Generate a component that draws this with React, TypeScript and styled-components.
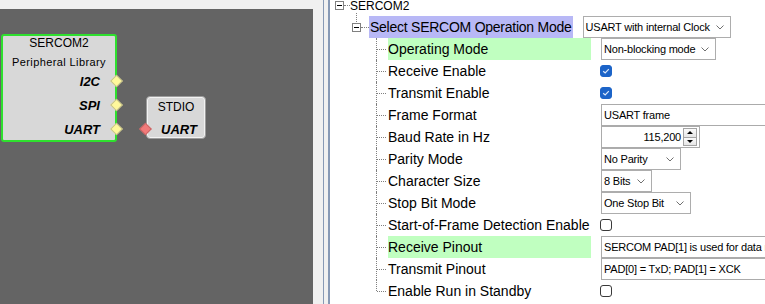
import React from "react";
import styled, { createGlobalStyle, css } from "styled-components";

const GlobalStyle = createGlobalStyle`
  html, body {
    margin: 0;
    padding: 0;
  }
  body {
    width: 765px;
    height: 304px;
    overflow: hidden;
    background: #fff;
    font-family: "Liberation Sans", Arial, sans-serif;
  }
`;

type Tone = "selected" | "changed" | undefined;

type OptionType = {
  label: string;
  tone?: Tone;
  control: React.ReactNode;
};

const Chevron = () => (
  <svg width="8" height="5" viewBox="0 0 8 5">
    <polyline points="0.5,0.5 4,4 7.5,0.5" fill="none" stroke="#707070" strokeWidth="1" />
  </svg>
);

const Dropdown = ({ value, width }: { value: string; width: number }) => (
  <Select $w={width}>
    <span>{value}</span>
    <Chevron />
  </Select>
);

const CheckBox = ({ on }: { on: boolean }) => (
  <Check $on={on}>
    {on && (
      <svg width="10" height="10" viewBox="0 0 10 10">
        <polyline points="2.2,5.2 4.2,7 7.8,3.2" fill="none" stroke="#dce9fb" strokeWidth="1.2" />
      </svg>
    )}
  </Check>
);

const NumberSpinner = ({ value }: { value: string }) => (
  <Spinner>
    <SpinValue>{value}</SpinValue>
    <SpinButtons>
      <SpinButton>
        <Arrow $up />
      </SpinButton>
      <SpinButton>
        <Arrow />
      </SpinButton>
    </SpinButtons>
  </Spinner>
);

const buildOptions = (): OptionType[] => [
  { label: "Operating Mode", tone: "changed", control: <Dropdown value="Non-blocking mode" width={115} /> },
  { label: "Receive Enable", control: <CheckBox on /> },
  { label: "Transmit Enable", control: <CheckBox on /> },
  { label: "Frame Format", control: <TextFieldBox>USART frame</TextFieldBox> },
  { label: "Baud Rate in Hz", control: <NumberSpinner value="115,200" /> },
  { label: "Parity Mode", control: <Dropdown value="No Parity" width={80} /> },
  { label: "Character Size", control: <Dropdown value="8 Bits" width={51} /> },
  { label: "Stop Bit Mode", control: <Dropdown value="One Stop Bit" width={90} /> },
  { label: "Start-of-Frame Detection Enable", control: <CheckBox on={false} /> },
  {
    label: "Receive Pinout",
    tone: "changed",
    control: <TextFieldBox>SERCOM PAD[1] is used for data reception</TextFieldBox>,
  },
  { label: "Transmit Pinout", control: <TextFieldBox>PAD[0] = TxD; PAD[1] = XCK</TextFieldBox> },
  { label: "Enable Run in Standby", control: <CheckBox on={false} /> },
];

const App = () => {
  const options = buildOptions();
  return (
    <>
      <GlobalStyle />
      <Screen>
        <DiagramPane>
          <Canvas>
            <Node $x={1} $y={25} $w={116} $h={108} $active>
              <NodeTitle>SERCOM2</NodeTitle>
              <NodeSubtitle>Peripheral Library</NodeSubtitle>
              <Port $side="right">
                I2C
                <Pin $side="right" />
              </Port>
              <Port $side="right">
                SPI
                <Pin $side="right" />
              </Port>
              <Port $side="right">
                UART
                <Pin $side="right" />
              </Port>
            </Node>
            <Node $x={146} $y={87} $w={60} $h={43}>
              <NodeTitle>STDIO</NodeTitle>
              <Port $side="left" $offset={3}>
                <Pin $side="left" $red />
                UART
              </Port>
            </Node>
          </Canvas>
        </DiagramPane>
        <Splitter />
        <ConfigPane>
          <Tree>
            <RootRow>
              <Expander />
              <Stub $w={6} />
              <span>SERCOM2</span>
            </RootRow>
            <GroupRow>
              <Expander />
              <Stub $w={8} />
              <NodeLabel $tone="selected">Select SERCOM Operation Mode</NodeLabel>
              <Dropdown value="USART with internal Clock" width={148} />
            </GroupRow>
            {options.map((option, i) => (
              <OptionRow key={option.label}>
                <Branch $last={i === options.length - 1} />
                <OptionLabel $tone={option.tone}>{option.label}</OptionLabel>
                {option.control}
              </OptionRow>
            ))}
          </Tree>
        </ConfigPane>
      </Screen>
    </>
  );
};

export default App;

const Screen = styled.div`
  display: flex;
  width: 765px;
  height: 304px;
  overflow: hidden;
`;

const DiagramPane = styled.div`
  box-sizing: border-box;
  display: flex;
  width: 323px;
  flex-shrink: 0;
  padding: 9px 10px 0 0;
  background: #f0f0f0;
`;

const Canvas = styled.div`
  position: relative;
  flex: 1;
  background: #646464;
`;

const Splitter = styled.div`
  width: 7px;
  flex-shrink: 0;
  background: linear-gradient(
    to right,
    #8799b5 0 1px,
    #f0f0f0 1px 5px,
    #8799b5 5px 7px
  );
`;

const ConfigPane = styled.div`
  position: relative;
  flex: 1;
  overflow: hidden;
  background: #fff;
`;

const Node = styled.div<{ $x: number; $y: number; $w: number; $h: number; $active?: boolean }>`
  position: absolute;
  left: ${(p) => p.$x}px;
  top: ${(p) => p.$y}px;
  width: ${(p) => p.$w}px;
  height: ${(p) => p.$h}px;
  box-sizing: border-box;
  display: flex;
  flex-direction: column;
  background: #d8d8d8;
  border-radius: 4px;
  color: #000;
  font-family: "Liberation Sans", Arial, sans-serif;
  ${(p) =>
    p.$active
      ? css`
          border: 2px solid #2ee02e;
          border-radius: 3px;
        `
      : css`
          border: 1px solid #9c9c9c;
          box-shadow: inset 0 0 0 1px #f2f2f2;
          padding-top: 3px;
        `}
`;

const NodeTitle = styled.div`
  font-size: 12px;
  line-height: 14px;
  text-align: center;
`;

const NodeSubtitle = styled.div`
  margin-top: 5px;
  font-size: 11px;
  line-height: 14px;
  letter-spacing: 0.4px;
  text-align: center;
`;

const Port = styled.div<{ $side: "left" | "right"; $offset?: number }>`
  position: relative;
  display: flex;
  align-items: center;
  height: 24px;
  flex-shrink: 0;
  margin-top: ${(p) => p.$offset ?? 0}px;
  justify-content: ${(p) => (p.$side === "right" ? "flex-end" : "flex-start")};
  padding: ${(p) => (p.$side === "right" ? "0 15px 0 0" : "0 0 0 14px")};
  font-size: 13px;
  font-weight: bold;
  font-style: italic;
`;

const Pin = styled.span<{ $side: "left" | "right"; $red?: boolean }>`
  position: absolute;
  top: 50%;
  ${(p) => (p.$side === "right" ? "right: -6px;" : "left: -6px;")}
  width: 7px;
  height: 7px;
  background: ${(p) => (p.$red ? "#f27a7a" : "#fff89c")};
  border: 1px solid ${(p) => (p.$red ? "#c86464" : "#c4c08a")};
  transform: translateY(-50%) rotate(45deg);
`;

const Tree = styled.div`
  display: flex;
  flex-direction: column;
  font-family: "Liberation Sans", Arial, sans-serif;
  font-size: 14px;
  color: #000;
`;

const RootRow = styled.div`
  display: flex;
  align-items: center;
  height: 11px;
  margin-bottom: 5px;
  padding-left: 5px;
  font-size: 12px;
  white-space: nowrap;
`;

const Expander = styled.span`
  position: relative;
  box-sizing: border-box;
  width: 9px;
  height: 9px;
  flex-shrink: 0;
  border: 1px solid #808080;
  background: #fff;

  &::after {
    content: "";
    position: absolute;
    left: 1px;
    right: 1px;
    top: 3px;
    height: 1px;
    background: #000;
  }
`;

const Stub = styled.span<{ $w: number }>`
  width: ${(p) => p.$w}px;
  height: 0;
  flex-shrink: 0;
  border-top: 1px dotted #808080;
`;

const GroupRow = styled.div`
  position: relative;
  display: flex;
  align-items: center;
  height: 22px;
  padding-left: 22px;
  white-space: nowrap;

  &::before {
    content: "";
    position: absolute;
    left: 26px;
    top: -3px;
    height: 11px;
    border-left: 1px dotted #808080;
  }
`;

const toneColor = (tone: Tone) =>
  tone === "selected" ? "#b8b8f6" : tone === "changed" ? "#c0ffc0" : "transparent";

const NodeLabel = styled.span<{ $tone?: Tone }>`
  height: 22px;
  line-height: 22px;
  padding: 0 1px;
  margin-right: 10px;
  letter-spacing: -0.25px;
  background: ${(p) => toneColor(p.$tone)};
`;

const OptionRow = styled.div`
  display: flex;
  align-items: center;
  height: 22px;
  padding-left: 46px;
  white-space: nowrap;
`;

const Branch = styled.span<{ $last?: boolean }>`
  position: relative;
  align-self: stretch;
  width: 12px;
  flex-shrink: 0;

  &::before {
    content: "";
    position: absolute;
    left: 0;
    top: 0;
    bottom: ${(p) => (p.$last ? "11px" : "0")};
    border-left: 1px dotted #808080;
  }

  &::after {
    content: "";
    position: absolute;
    left: 1px;
    top: 11px;
    width: 9px;
    border-top: 1px dotted #808080;
  }
`;

const OptionLabel = styled.span<{ $tone?: Tone }>`
  width: 203px;
  height: 22px;
  flex-shrink: 0;
  margin-right: 10px;
  line-height: 22px;
  background: ${(p) => toneColor(p.$tone)};
`;

const controlText = css`
  font-family: "Liberation Sans", Arial, sans-serif;
  font-size: 11px;
  letter-spacing: -0.2px;
  color: #000;
`;

const Select = styled.div<{ $w: number }>`
  ${controlText}
  box-sizing: border-box;
  display: flex;
  align-items: center;
  justify-content: space-between;
  width: ${(p) => p.$w}px;
  height: 22px;
  flex-shrink: 0;
  padding: 0 6px 0 2px;
  border: 1px solid #adadad;
  background: #fff;
`;

const TextFieldBox = styled.div`
  ${controlText}
  box-sizing: border-box;
  display: flex;
  align-items: center;
  width: 200px;
  height: 22px;
  flex-shrink: 0;
  padding: 0 2px;
  border: 1px solid #ababab;
  background: #fff;
  overflow: hidden;
`;

const Spinner = styled.div`
  ${controlText}
  box-sizing: border-box;
  display: flex;
  align-items: center;
  justify-content: flex-end;
  width: 99px;
  height: 22px;
  flex-shrink: 0;
  padding-right: 2px;
  border: 1px solid #ababab;
  background: #fff;
`;

const SpinValue = styled.span`
  margin-right: 2px;
`;

const SpinButtons = styled.div`
  box-sizing: border-box;
  display: flex;
  flex-direction: column;
  width: 14px;
  height: 18px;
  border: 1px solid #a4a4a4;
`;

const SpinButton = styled.div`
  display: flex;
  flex: 1;
  align-items: center;
  justify-content: center;
  background: linear-gradient(#fbfbfb, #e6e6e6);

  & + & {
    border-top: 1px solid #a4a4a4;
  }
`;

const Arrow = styled.span<{ $up?: boolean }>`
  width: 0;
  height: 0;
  border-left: 3px solid transparent;
  border-right: 3px solid transparent;
  ${(p) => (p.$up ? "border-bottom: 3px solid #000;" : "border-top: 3px solid #000;")}
`;

const Check = styled.span<{ $on: boolean }>`
  box-sizing: border-box;
  display: flex;
  align-items: center;
  justify-content: center;
  width: 12px;
  height: 12px;
  margin-left: -1px;
  border-radius: 3px;
  ${(p) =>
    p.$on
      ? css`
          background: #1c64c8;
          border: 1px solid #1c64c8;
        `
      : css`
          background: #fff;
          border: 1px solid #3a3a3a;
        `}
`;
